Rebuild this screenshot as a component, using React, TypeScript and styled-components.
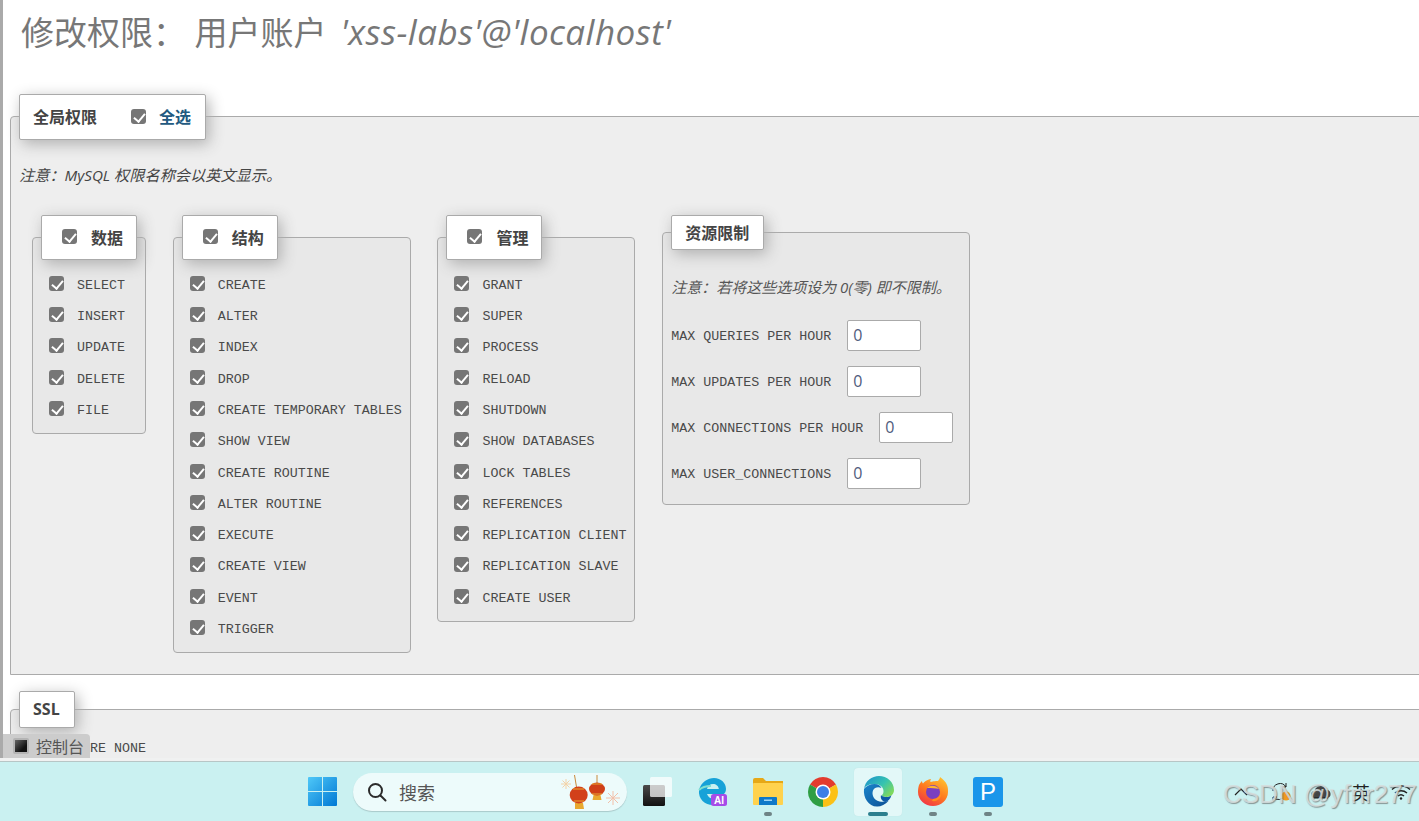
import React from "react";
import styled, { createGlobalStyle } from "styled-components";

const sans = `"Open Sans", "Noto Sans CJK SC", sans-serif`;
const mono = `"Liberation Mono", "Noto Sans CJK SC", monospace`;

const GlobalStyle = createGlobalStyle`
  html, body { margin: 0; padding: 0; background: #fff; }
  * { box-sizing: border-box; }
`;

const Page = styled.div`
  width: 1419px;
  height: 821px;
  display: flex;
  flex-direction: column;
  overflow: hidden;
  font-family: ${sans};
`;

const Viewport = styled.main`
  position: relative;
  height: 758px;
  flex: none;
  overflow: hidden;
  border-left: 3px solid #aaa;
  background: #fff;
`;

const Title = styled.h2`
  margin: 0;
  height: 64px;
  padding-left: 18px;
  font-size: 33px;
  line-height: 64px;
  font-weight: 400;
  color: #777;
  white-space: pre;
  em {
    margin-left: 5px;
    font-size: 35px;
    letter-spacing: 0.45px;
  }
`;

const Fieldset = styled.section<{ $top: number }>`
  margin: ${(p) => p.$top}px -40px 0 7px;
  padding: 0 40px 20px 8px;
  border: 1px solid #aaa;
  border-radius: 4px 0 0 0;
  background: #eee;
`;

const Legend = styled.div`
  display: flex;
  align-items: center;
  width: fit-content;
  padding-bottom: 2px;
  background: #fff;
  border: 1px solid #aaa;
  border-radius: 2px;
  box-shadow: 3px 4px 15px #b0b0b0;
  font-size: 16px;
  font-weight: 700;
  color: #444;
  white-space: nowrap;
  position: relative;
`;

const MainLegend = styled(Legend)`
  height: 46px;
  margin-top: -23px;
  padding-left: 13px;
  padding-right: 14px;
`;

const SslLegend = styled(Legend)`
  height: 37px;
  margin-top: -19px;
  padding-left: 13px;
  padding-right: 14px;
`;

const SelectAll = styled.a`
  color: #235a81;
  margin-left: 13px;
`;

const Check = styled.input.attrs({ type: "checkbox", defaultChecked: true })`
  appearance: none;
  flex: none;
  position: relative;
  width: 15px;
  height: 15px;
  margin: 0;
  border-radius: 3px;
  background: #767676;
  &::before {
    content: "";
    position: absolute;
    left: 5px;
    top: 2px;
    width: 5px;
    height: 9px;
    border: solid #fff;
    border-width: 0 2px 2px 0;
    transform: rotate(40deg);
  }
`;

const GlobalCheck = styled(Check)`
  margin-left: 34px;
`;

const RowCheck = styled(Check)`
  margin-bottom: 4px;
`;

const Note = styled.p`
  margin: 25px 0 30px;
  height: 20px;
  font-size: 15.2px;
  line-height: 20px;
  font-style: italic;
  color: #444;
`;

const Groups = styled.div`
  display: flex;
  align-items: flex-start;
  gap: 26.75px;
  margin-left: 13px;
  height: 439px;
`;

const Group = styled.div`
  flex: none;
  margin-top: 22px;
  padding: 0 8px 8px 0;
  border: 1px solid #aaa;
  border-radius: 4px;
  background: #e8e8e8;
`;

const GroupLegend = styled(Legend)`
  height: 45px;
  width: 96px;
  margin: -23px 0 8.8px 8px;
  padding-left: 20px;
  gap: 14px;
`;

const Privilege = styled.label`
  display: flex;
  align-items: center;
  gap: 13px;
  height: 31.27px;
  padding: 2px 0 0 16px;
  font-family: ${mono};
  font-size: 13.33px;
  color: #4a4a4a;
  white-space: pre;
`;

const LimitBox = styled.div`
  flex: none;
  margin-top: 17px;
  padding: 0 16px 15px 8px;
  border: 1px solid #aaa;
  border-radius: 4px;
  background: #e8e8e8;
`;

const LimitLegend = styled(Legend)`
  height: 35px;
  margin-top: -18px;
  padding-left: 13px;
  padding-right: 14px;
`;

const LimitNote = styled.p`
  margin: 27px 0 23px;
  height: 20px;
  font-size: 15px;
  line-height: 20px;
  font-style: italic;
  color: #555;
  white-space: nowrap;
`;

const LimitRow = styled.div`
  display: flex;
  align-items: center;
  gap: 16px;
  height: 31px;
  margin-bottom: 15px;
  &:last-child { margin-bottom: 0; }
  font-family: ${mono};
  font-size: 13.33px;
  color: #4a4a4a;
  white-space: pre;
`;

const LimitLabel = styled.span`
  padding-top: 2px;
`;

const LimitInput = styled.input`
  width: 74px;
  height: 31px;
  padding: 0 0 2px 5px;
  border: 1px solid #aaa;
  border-radius: 2px;
  background: #fff;
  font-family: ${sans};
  font-size: 16px;
  color: #4f5b7c;
  outline: none;
`;

const SslText = styled.div`
  margin: 12px 0 0 31px;
  font-family: ${mono};
  font-size: 13.33px;
  line-height: 18px;
  color: #4a4a4a;
`;

const ConsoleTab = styled.div`
  position: absolute;
  left: 0;
  bottom: 0;
  width: 87px;
  height: 24px;
  display: flex;
  align-items: center;
  gap: 7px;
  padding-left: 10px;
  background: #ccc;
  border-radius: 0 4px 0 0;
  font-size: 16px;
  color: #555;
`;

const ConsoleIcon = styled.span`
  flex: none;
  width: 16px;
  height: 16px;
  border: 2px solid #b4b4b4;
  border-radius: 2px;
  background: linear-gradient(135deg, #666, #111 70%);
`;

const Strip = styled.div`
  height: 4px;
  flex: none;
  background: #f0f1f1;
  border-bottom: 1px solid #b7c6c6;
`;

const Taskbar = styled.footer`
  position: relative;
  flex: 1;
  display: flex;
  align-items: center;
  gap: 7px;
  padding-left: 298px;
  background: #caf1f1;
`;

const TaskButton = styled.div<{ $active?: boolean }>`
  position: relative;
  flex: none;
  width: 48px;
  height: 48px;
  display: flex;
  align-items: center;
  justify-content: center;
  border-radius: 4px;
  background: ${(p) => (p.$active ? "#e3f8f8" : "transparent")};
  box-shadow: ${(p) => (p.$active ? "0 0 1px #b5dcdc" : "none")};
`;

const Indicator = styled.span<{ $active?: boolean }>`
  position: absolute;
  left: 50%;
  bottom: 0;
  width: ${(p) => (p.$active ? 20 : 8)}px;
  height: 4px;
  margin-left: ${(p) => (p.$active ? -10 : -4)}px;
  border-radius: 2px;
  background: ${(p) => (p.$active ? "#2b7f8e" : "#6f8486")};
`;

const SearchBox = styled.div`
  flex: none;
  width: 274px;
  height: 38px;
  display: flex;
  align-items: center;
  padding: 0 1px 0 14px;
  border-radius: 19px;
  background: #edfbfb;
  box-shadow: 0 1px 1px #a9c9ca;
  font-size: 18px;
  color: #555;
`;

const SearchLabel = styled.span`
  margin-left: 12px;
  flex: 1;
`;

const Tray = styled.div`
  position: absolute;
  left: 1221px;
  top: 0;
  height: 100%;
  display: grid;
  grid-template-columns: repeat(5, 40px);
  align-items: center;
  justify-items: center;
  font-size: 18px;
  color: #222;
`;

const Watermark = styled.div`
  position: absolute;
  left: 1223px;
  top: 15px;
  font-family: "Liberation Sans", sans-serif;
  font-size: 26px;
  line-height: 34px;
  color: rgba(215, 222, 222, 0.85);
  text-shadow: 1px 1px 1px rgba(90, 90, 90, 0.6);
  white-space: nowrap;
`;

const data = ["SELECT", "INSERT", "UPDATE", "DELETE", "FILE"];
const structure = [
  "CREATE", "ALTER", "INDEX", "DROP", "CREATE TEMPORARY TABLES", "SHOW VIEW",
  "CREATE ROUTINE", "ALTER ROUTINE", "EXECUTE", "CREATE VIEW", "EVENT", "TRIGGER",
];
const admin = [
  "GRANT", "SUPER", "PROCESS", "RELOAD", "SHUTDOWN", "SHOW DATABASES", "LOCK TABLES",
  "REFERENCES", "REPLICATION CLIENT", "REPLICATION SLAVE", "CREATE USER",
];
const limits = [
  "MAX QUERIES PER HOUR", "MAX UPDATES PER HOUR", "MAX CONNECTIONS PER HOUR", "MAX USER_CONNECTIONS",
];

function PrivilegeGroup({ name, items }: { name: string; items: string[] }) {
  return (
    <Group>
      <GroupLegend>
        <Check />
        {name}
      </GroupLegend>
      {items.map((item) => (
        <Privilege key={item}>
          <RowCheck />
          {item}
        </Privilege>
      ))}
    </Group>
  );
}

const WindowsLogo = () => (
  <svg width="29" height="29" viewBox="0 0 29 29">
    <defs>
      <linearGradient id="win" x1="0" y1="0" x2="1" y2="1">
        <stop offset="0" stopColor="#4fc8f8" />
        <stop offset="1" stopColor="#0078d4" />
      </linearGradient>
    </defs>
    <path fill="url(#win)" d="M1 0h13v14H0V1a1 1 0 0 1 1-1zM15 0h13a1 1 0 0 1 1 1v13H15zM0 15h14v14H1a1 1 0 0 1-1-1zM15 15h14v13a1 1 0 0 1-1 1H15z" />
  </svg>
);

const SearchGlass = () => (
  <svg width="20" height="20" viewBox="0 0 20 20" fill="none" stroke="#2b2b2b" strokeWidth="2">
    <circle cx="8.5" cy="8.5" r="6.5" />
    <path d="M13.5 13.5L18.5 18.5" strokeLinecap="round" />
  </svg>
);

const Lanterns = () => (
  <svg width="66" height="36" viewBox="0 0 66 36">
    <g strokeWidth="1">
      <path d="M1 10h10M6 5v10M2.500 6.500l7 7M9.500 6.500l-7 7" stroke="#f3d3a8" />
      <path d="M46 24h14M53 17v14M48 19l10 10M58 19l-10 10" stroke="#f2bfa8" />
    </g>
    <path d="M14.500 1l2 12M37 1v8" stroke="#c98a3a" />
    <path d="M15 29h8l1 6h-9zM33.500 21h7l1 5h-9z" fill="#e8a830" />
    <ellipse cx="18.700" cy="21" rx="9" ry="8.500" fill="#d2401a" />
    <ellipse cx="37" cy="15" rx="8" ry="6.500" fill="#cf3f18" />
    <path d="M13 15h11M14 27h10M32 10h10M32 20h10" stroke="#e8a830" />
  </svg>
);

const TaskView = () => (
  <svg width="30" height="30" viewBox="0 0 30 30">
    <defs>
      <linearGradient id="tvd" x1="0" y1="0" x2="0" y2="1">
        <stop offset="0" stopColor="#4a4a4a" />
        <stop offset="1" stopColor="#111" />
      </linearGradient>
    </defs>
    <rect x="0" y="8" width="22" height="21" rx="1.5" fill="url(#tvd)" />
    <rect x="7" y="0" width="22" height="20" rx="1.5" fill="#fff" fillOpacity="0.72" />
  </svg>
);

const AiText = styled.text`
  fill: #fff;
  font-family: "Liberation Sans", sans-serif;
  font-size: 10px;
  font-weight: 700;
  text-anchor: middle;
`;

const EdgeAi = () => (
  <svg width="30" height="30" viewBox="0 0 30 30">
    <path d="M1 13C3 5 10 1 16 1c7 0 12 5 12 11 0 2-1 4-2 5H9c1 3 4 5 8 5 1.500 0 3-.2 4-.7V27c-2 .7-4 1-6 1C7 28 0 22 1 13z" fill="#17a2d8" />
    <path d="M9 12c.5-3 3-5 6-5s5.500 2 5.800 5z" fill="#caf1f1" />
    <path d="M1 13c3-3 7-4 12-4" stroke="#7fe0d0" strokeWidth="2" fill="none" />
    <rect x="13" y="17" width="16" height="12" rx="2.500" fill="#a64ce8" />
    <AiText x="21" y="27">AI</AiText>
  </svg>
);

const Folder = () => (
  <svg width="30" height="27" viewBox="0 0 30 27">
    <path d="M0 2a2 2 0 0 1 2-2h8l3 3h17v6H0z" fill="#e6a817" />
    <rect x="0" y="5" width="30" height="22" rx="1" fill="#ffd24d" />
    <path d="M6 20a1 1 0 0 1 1-1h16a1 1 0 0 1 1 1v7H6z" fill="#0f78c8" />
    <rect x="11" y="21.500" width="8" height="1.500" fill="#9fd4f5" />
  </svg>
);

const Chrome = () => (
  <svg width="30" height="30" viewBox="0 0 30 30">
    <path d="M15 15L2.010 7.500A15 15 0 0 1 27.990 7.500z" fill="#e33b2e" />
    <path d="M15 15L27.990 7.500A15 15 0 0 1 15 30z" fill="#fbc117" />
    <path d="M15 15L15 30A15 15 0 0 1 2.010 7.500z" fill="#2f9e44" />
    <circle cx="15" cy="15" r="7.500" fill="#fff" />
    <circle cx="15" cy="15" r="6" fill="#3d7fe6" />
  </svg>
);

const Edge = () => (
  <svg width="31" height="31" viewBox="0 0 31 31">
    <defs>
      <linearGradient id="edgeTop" x1="0" y1="0" x2="1" y2="0.7">
        <stop offset="0" stopColor="#1a8ed0" />
        <stop offset="0.6" stopColor="#36c3b0" />
        <stop offset="1" stopColor="#7fd95e" />
      </linearGradient>
      <linearGradient id="edgeLow" x1="0" y1="0" x2="1" y2="1">
        <stop offset="0" stopColor="#1a86cc" />
        <stop offset="1" stopColor="#0c4f94" />
      </linearGradient>
    </defs>
    <path d="M1 13C2 5 9 0 16 0c8 0 15 6 15 14 0 4-3 7-7.500 7-3 0-5-1-4.500-2 1-1 1.500-2 1.500-4 0-4-4-7-8.500-7C6 8 2 10 1 13z" fill="url(#edgeTop)" />
    <path d="M1 13c2-3 6-5 10.500-5 4 0 6 2 7 4-3-1.500-7-1-8.500 2.500-1.500 4 .5 9.500 6.500 11 3 .7 6.500.3 9-.5-3 3.500-7.500 5.500-11 5.500C6 31 0 22 1 13z" fill="url(#edgeLow)" />
    <path d="M18 19c1 1.500 3.500 2 5.500 2 2 0 4-.5 5-2-1 4-3.500 6.500-6 7-3-.5-5.500-3-4.500-7z" fill="#0e5aa6" />
  </svg>
);

const Firefox = () => (
  <svg width="30" height="30" viewBox="0 0 30 30">
    <defs>
      <linearGradient id="ffx" x1="0.8" y1="0" x2="0.2" y2="1">
        <stop offset="0" stopColor="#ffc22e" />
        <stop offset="0.5" stopColor="#ff7a1f" />
        <stop offset="1" stopColor="#f0304a" />
      </linearGradient>
    </defs>
    <path d="M1 8c1-2 2-3 3-4 0 1 .5 2 1 2.500C8 3 12 2 13 2c-.5 1-1 2-.5 3C15 4 19 4 20 4c1-1 2-3 2-4 3 2 6 5 7 8 1 2 1 5 1 7 0 8-7 14-15 14S0 23 0 15c0-2 .3-5 1-7z" fill="url(#ffx)" />
    <circle cx="15" cy="15" r="7" fill="#7a3fc0" />
    <path d="M9 11c3-3 9-3 12 1-3-1-8-1-12-1z" fill="#ffb52e" />
    <path d="M15 22c4 0 8-3 8-8 2 6-3 11-9 10z" fill="#ff8a1f" />
  </svg>
);

const PSquare = styled.span`
  width: 30px;
  height: 30px;
  display: flex;
  align-items: center;
  justify-content: center;
  border-radius: 3px;
  background: #1a96ea;
  color: #fff;
  font-family: "Liberation Sans", sans-serif;
  font-size: 24px;
`;

const Chevron = () => (
  <svg width="14" height="9" viewBox="0 0 14 9" fill="none" stroke="#222" strokeWidth="1.200">
    <path d="M1 8l6-6 6 6" />
  </svg>
);

const SyncIcon = () => (
  <svg width="20" height="22" viewBox="0 0 20 22" fill="none" stroke="#222" strokeWidth="1">
    <path d="M2 10a7 7 0 0 1 13-4M15 2v4h-4M14 14a7 7 0 0 1-12 2M2 20v-4h4" />
    <circle cx="15" cy="15" r="4.500" fill="#f09a20" stroke="none" />
  </svg>
);

const Cloud = () => (
  <svg width="20" height="14" viewBox="0 0 20 14">
    <path d="M4 13a3.500 3.500 0 0 1-.5-7A6 6 0 0 1 15 5a4 4 0 0 1 1 8z" fill="#444" />
    <path d="M3 13h14" stroke="#111" />
  </svg>
);

const Wifi = () => (
  <svg width="20" height="16" viewBox="0 0 20 16" fill="none" stroke="#222" strokeWidth="1.400">
    <path d="M1 5.500a13 13 0 0 1 18 0M4 9a9 9 0 0 1 12 0M7 12a4.500 4.500 0 0 1 6 0" />
    <circle cx="10" cy="14.500" r="1.200" fill="#222" stroke="none" />
  </svg>
);

export default function App() {
  return (
    <Page>
      <GlobalStyle />
      <Viewport>
        <Title>
          修改权限： 用户账户 <em>'xss-labs'@'localhost'</em>
        </Title>
        <Fieldset $top={52}>
          <MainLegend>
            全局权限
            <GlobalCheck />
            <SelectAll>全选</SelectAll>
          </MainLegend>
          <Note>注意：MySQL 权限名称会以英文显示。</Note>
          <Groups>
            <PrivilegeGroup name="数据" items={data} />
            <PrivilegeGroup name="结构" items={structure} />
            <PrivilegeGroup name="管理" items={admin} />
            <LimitBox>
              <LimitLegend>资源限制</LimitLegend>
              <LimitNote>注意：若将这些选项设为 0(零) 即不限制。</LimitNote>
              {limits.map((limit) => (
                <LimitRow key={limit}>
                  <LimitLabel>{limit}</LimitLabel>
                  <LimitInput defaultValue="0" />
                </LimitRow>
              ))}
            </LimitBox>
          </Groups>
        </Fieldset>
        <Fieldset $top={34}>
          <SslLegend>SSL</SslLegend>
          <SslText>REQUIRE NONE</SslText>
        </Fieldset>
        <ConsoleTab>
          <ConsoleIcon />
          控制台
        </ConsoleTab>
      </Viewport>
      <Strip />
      <Taskbar>
        <TaskButton><WindowsLogo /></TaskButton>
        <SearchBox>
          <SearchGlass />
          <SearchLabel>搜索</SearchLabel>
          <Lanterns />
        </SearchBox>
        <TaskButton><TaskView /></TaskButton>
        <TaskButton><EdgeAi /></TaskButton>
        <TaskButton><Folder /><Indicator /></TaskButton>
        <TaskButton><Chrome /></TaskButton>
        <TaskButton $active><Edge /><Indicator $active /></TaskButton>
        <TaskButton><Firefox /><Indicator /></TaskButton>
        <TaskButton><PSquare>P</PSquare><Indicator /></TaskButton>
        <Tray>
          <Chevron />
          <SyncIcon />
          <Cloud />
          <span>英</span>
          <Wifi />
        </Tray>
        <Watermark>CSDN @yfnr277</Watermark>
      </Taskbar>
    </Page>
  );
}
